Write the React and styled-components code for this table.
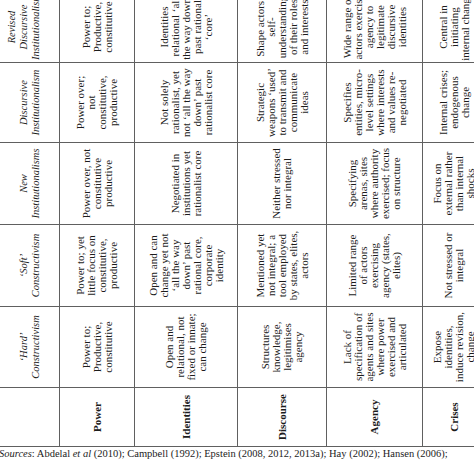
import styled, { createGlobalStyle } from "styled-components";

const GlobalStyle = createGlobalStyle`
  html, body {
    margin: 0;
    padding: 0;
    background: #fff;
    overflow: hidden;
  }
`;

const approaches = [
  { key: "hard", head: ["‘Hard’", "Constructivism"] },
  { key: "soft", head: ["‘Soft’", "Constructivism"] },
  { key: "new", head: ["New", "Institutionalisms"] },
  { key: "di", head: ["Discursive", "Institutionalism"] },
  { key: "rdi", head: ["Revised", "Discursive", "Institutionalism"] },
];

const rows = [
  {
    label: "Power",
    cells: [
      ["Power to;", "Productive,", "constitutive"],
      ["Power to; yet", "little focus on", "constitutive,", "productive"],
      ["Power over, not", "constitutive", "productive"],
      ["Power over;", "not", "constitutive,", "productive"],
      ["Power to;", "Productive,", "constitutive"],
    ],
  },
  {
    label: "Identities",
    cells: [
      ["Open and", "relational, not", "fixed or innate;", "can change"],
      ["Open and can", "change yet not", "‘all the way", "down’ past", "rational core,", "corporate", "identity"],
      ["Negotiated in", "institutions yet", "rationalist core"],
      ["Not solely", "rationalist, yet", "not ‘all the way", "down’ past", "rationalist core"],
      ["Identities", "relational ‘all", "the way down’", "past rational", "‘core’"],
    ],
  },
  {
    label: "Discourse",
    cells: [
      ["Structures", "knowledge,", "legitimises", "agency"],
      ["Mentioned yet", "not integral; a", "tool employed", "by states, elites,", "actors"],
      ["Neither stressed", "nor integral"],
      ["Strategic", "weapons ‘used’", "to transmit and", "communicate", "ideas"],
      ["Shape actors’", "self-", "understanding", "of their roles", "and interests"],
    ],
  },
  {
    label: "Agency",
    cells: [
      ["Lack of", "specification of", "agents and sites", "where power", "exercised and", "articulated"],
      ["Limited range", "of actors", "exercising", "agency (states,", "elites)"],
      ["Specifying", "arenas, sites", "where authority", "exercised; focus", "on structure"],
      ["Specifies", "entities, micro-", "level settings", "where interests", "and values re-", "negotiated"],
      ["Wide range of", "actors exercise", "agency to", "legitimate", "discursive", "identities"],
    ],
  },
  {
    label: "Crises",
    cells: [
      ["Expose", "identities,", "induce revision,", "change"],
      ["Not stressed or", "integral"],
      ["Focus on", "external rather", "than internal", "shocks"],
      ["Internal crises;", "endogenous", "change"],
      ["Central in", "initiating", "internal change"],
    ],
  },
];

const Page = styled.div`
  width: 474px;
  height: 474px;
  overflow: hidden;
  background: #fff;
  font-family: "Liberation Serif", "Times New Roman", serif;
  color: #1c1c1c;
`;

const Stage = styled.div`
  height: 447px;
`;

/* the table is set upright, then turned a quarter to the left like the page */
const Sheet = styled.div`
  display: grid;
  grid-template-columns: 58px 80px 81px 81px 79px 70px;
  grid-template-rows: 62px 74px 102px 88px 95px 62px;
  gap: 1px;
  padding: 1px;
  width: max-content;
  background: #606060;
  transform: translate(-4px, 447px) rotate(-90deg);
  transform-origin: 0 0;
`;

const Cell = styled.div`
  background: #fff;
  display: flex;
  flex-direction: column;
  align-items: center;
  justify-content: center;
  text-align: center;
  font-size: 11px;
  line-height: 11px;
  white-space: nowrap;
`;

const HeadCell = styled(Cell)`
  justify-content: flex-end;
  padding-bottom: 17px;
  font-style: italic;
  font-size: 10.5px;
  line-height: 12px;
`;

const LabelCell = styled(Cell)`
  font-weight: bold;
`;

const Line = styled.span`
  display: block;
`;

const Sources = styled.div`
  margin-left: -1px;
  font-size: 10.5px;
  line-height: 14px;
  white-space: nowrap;
`;

const Lines = ({ lines }) => lines.map((l, i) => <Line key={i}>{l}</Line>);

export default function App() {
  return (
    <Page>
      <GlobalStyle />
      <Stage>
        <Sheet>
          <HeadCell />
          {approaches.map((a) => (
            <HeadCell key={a.key}>
              <Lines lines={a.head} />
            </HeadCell>
          ))}
          {rows.map((r) => [
            <LabelCell key={r.label}>{r.label}</LabelCell>,
            ...r.cells.map((c, i) => (
              <Cell key={r.label + i}>
                <Lines lines={c} />
              </Cell>
            )),
          ])}
        </Sheet>
      </Stage>
      <Sources>
        <i>Sources</i>: Abdelal <i>et al</i> (2010); Campbell (1992); Epstein (2008, 2012, 2013a); Hay (2002); Hansen (2006);
      </Sources>
    </Page>
  );
}
